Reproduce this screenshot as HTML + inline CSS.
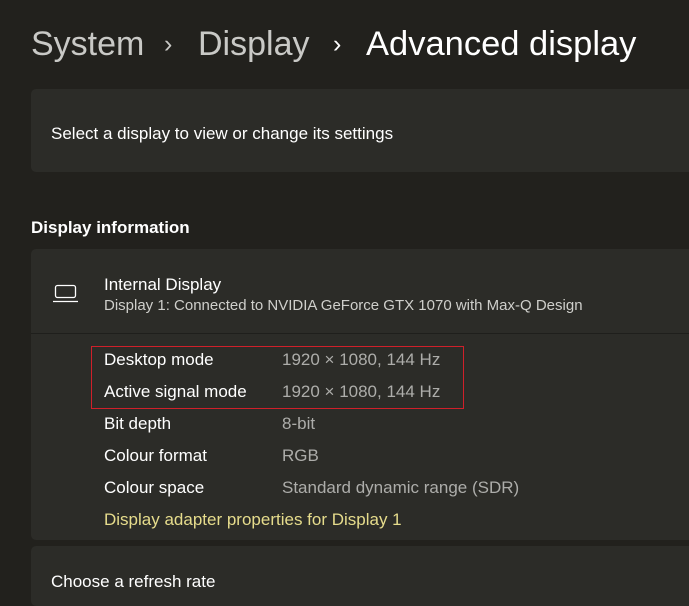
<!DOCTYPE html>
<html><head><style>
body{margin:0;width:689px;height:593px;overflow:hidden;background:#22211d;font-family:"Liberation Sans",sans-serif;color:#fff;position:relative}
.a{position:absolute;white-space:nowrap}
.card{position:absolute;left:31px;width:670px;background:#2c2c28;border-radius:5px}
.t{font-size:17px}
</style></head><body>
<div class="a" style="left:31px;top:25px;font-size:34px;color:#c9c9c6">System</div>
<div class="a" style="left:164px;top:30px;font-size:25px;color:#c9c9c6">›</div>
<div class="a" style="left:198px;top:25px;font-size:34px;color:#c9c9c6">Display</div>
<div class="a" style="left:333px;top:30px;font-size:25px;color:#fff">›</div>
<div class="a" style="left:366px;top:25px;font-size:34.5px;color:#fff">Advanced display</div>
<div class="card" style="top:89px;height:83px"></div>
<div class="a t" style="left:51px;top:124px">Select a display to view or change its settings</div>
<div class="a" style="left:31px;top:218px;font-size:17px;font-weight:bold">Display information</div>
<div class="card" style="top:249px;height:291px"></div>
<div class="a" style="left:31px;top:333px;width:670px;height:1px;background:#1f1f1c"></div>
<svg class="a" style="left:52px;top:284px" width="28" height="20"><rect x="3.5" y="1.5" width="20" height="12" rx="2" fill="none" stroke="#fff" stroke-width="1.3"/><line x1="1" y1="17.5" x2="26" y2="17.5" stroke="#fff" stroke-width="1.3"/></svg>
<div class="a t" style="left:104px;top:275px">Internal Display</div>
<div class="a" style="left:104px;top:297px;font-size:15px;color:#cfcfcb">Display 1: Connected to NVIDIA GeForce GTX 1070 with Max-Q Design</div>
<div class="a" style="left:91px;top:346px;width:371px;height:61px;border:1px solid #d0202a"></div>
<div class="a t" style="left:104px;top:350px">Desktop mode</div>
<div class="a t" style="left:282px;top:350px;color:#adadaa">1920 × 1080, 144 Hz</div>
<div class="a t" style="left:104px;top:382px">Active signal mode</div>
<div class="a t" style="left:282px;top:382px;color:#adadaa">1920 × 1080, 144 Hz</div>
<div class="a t" style="left:104px;top:414px">Bit depth</div>
<div class="a t" style="left:282px;top:414px;color:#adadaa">8-bit</div>
<div class="a t" style="left:104px;top:446px">Colour format</div>
<div class="a t" style="left:282px;top:446px;color:#adadaa">RGB</div>
<div class="a t" style="left:104px;top:478px">Colour space</div>
<div class="a t" style="left:282px;top:478px;color:#adadaa">Standard dynamic range (SDR)</div>
<div class="a t" style="left:104px;top:510px;color:#e6dc8c">Display adapter properties for Display 1</div>
<div class="card" style="top:546px;height:60px"></div>
<div class="a t" style="left:51px;top:572px">Choose a refresh rate</div>
</body></html>
